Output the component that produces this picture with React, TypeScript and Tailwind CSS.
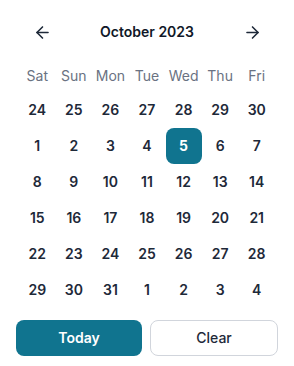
import { ArrowLeft, ArrowRight } from 'lucide-react';

const weekdays = ['Sat', 'Sun', 'Mon', 'Tue', 'Wed', 'Thu', 'Fri'];

// Oct 2023, week starting Saturday
const days = [
    24, 25, 26, 27, 28, 29, 30,
    1, 2, 3, 4, 5, 6, 7,
    8, 9, 10, 11, 12, 13, 14,
    15, 16, 17, 18, 19, 20, 21,
    22, 23, 24, 25, 26, 27, 28,
    29, 30, 31, 1, 2, 3, 4,
];

export default function App() {
    const selected = 11;

    return (
        <div
            className="w-[294px] h-[366px] bg-white px-4 pt-4"
            style={{ fontFamily: 'Inter, "Noto Sans", sans-serif' }}
        >
            <div className="flex items-center justify-between h-8 px-[10px]">
                <button className="w-8 h-8 flex items-center justify-center text-gray-800">
                    <ArrowLeft size={19} strokeWidth={2} />
                </button>
                <span className="text-sm font-semibold text-gray-900">October 2023</span>
                <button className="w-8 h-8 flex items-center justify-center text-gray-800">
                    <ArrowRight size={19} strokeWidth={2} />
                </button>
            </div>

            <div className="w-[256px] mx-auto mt-3">
                <div className="grid grid-cols-7 h-8">
                    {weekdays.map((d) => (
                        <div key={d} className="flex items-center justify-center text-sm text-gray-500">
                            {d}
                        </div>
                    ))}
                </div>
                <div className="grid grid-cols-7">
                    {days.map((d, i) => (
                        <div key={i} className="h-9 flex items-center justify-center">
                            {i === selected ? (
                                <span className="w-9 h-9 flex items-center justify-center rounded-lg bg-[#10748f] text-white text-sm font-bold">
                                    {d}
                                </span>
                            ) : (
                                <span className="text-sm font-semibold text-gray-800">{d}</span>
                            )}
                        </div>
                    ))}
                </div>
            </div>

            <div className="flex gap-2 mt-3">
                <button className="flex-1 h-9 rounded-lg bg-[#10748f] text-white text-sm font-semibold">
                    Today
                </button>
                <button className="flex-1 h-9 rounded-lg border border-gray-300 bg-white text-gray-800 text-sm font-medium">
                    Clear
                </button>
            </div>
        </div>
    );
}
